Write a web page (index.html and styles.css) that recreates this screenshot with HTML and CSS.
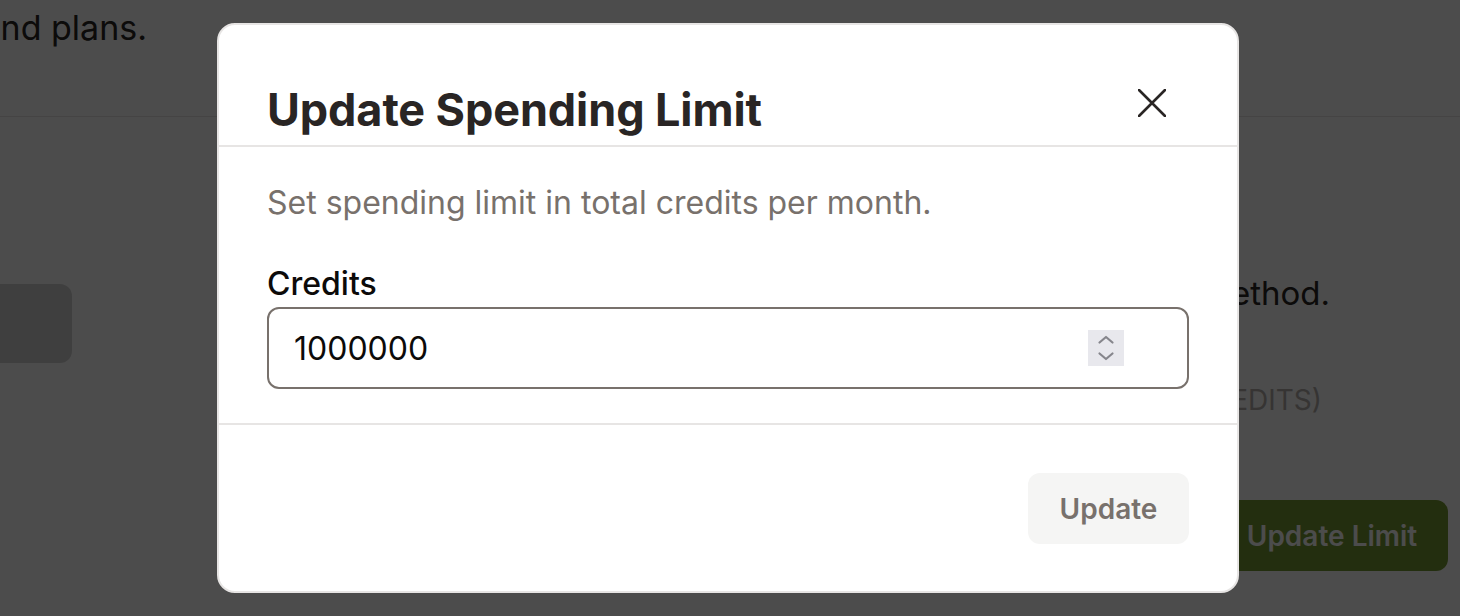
FILE: index.html
```html
<!DOCTYPE html>
<html lang="en">
<head>
    <meta charset="UTF-8">
    <meta name="viewport" content="width=device-width, initial-scale=1.0">
    <title>Billing</title>
    <link rel="stylesheet" href="styles.css">
</head>
<body>
  <div class="page">
    <header class="page-head">
      <div class="desc-wrap">
        <p class="page-desc">Manage your usage, billing and plans.</p>
      </div>
    </header>
    <main class="page-body">
      <div class="plan-card"></div>
      <section class="billing">
        <p class="billing-note">Add or update your payment method.</p>
        <span class="billing-label">SPENDING LIMIT (CREDITS)</span>
        <button class="btn-limit" type="button">Update Limit</button>
      </section>
    </main>
  </div>

  <div class="overlay">
    <div class="modal">
      <div class="modal-head">
        <h2 class="modal-title">Update Spending Limit</h2>
        <button class="close" type="button" aria-label="Close">
          <svg width="28" height="28" viewBox="0 0 28 28">
            <path d="M1 1 L27 27 M27 1 L1 27" stroke="#292524" stroke-width="2.6" stroke-linecap="round" fill="none"/>
          </svg>
        </button>
      </div>
      <form class="modal-body" id="limit-form">
        <p class="modal-text">Set spending limit in total credits per month.</p>
        <label for="credits" class="field-label">Credits</label>
        <div class="field">
          <input id="credits" class="input" type="text" value="1000000" />
          <span class="spin">
            <svg width="36" height="36" viewBox="0 0 36 36">
              <path d="M11.5 12.5 L18 7 L24.5 12.5" stroke="#86868c" stroke-width="2.2" fill="none" stroke-linecap="round" stroke-linejoin="round"/>
              <path d="M11.5 23.5 L18 29 L24.5 23.5" stroke="#86868c" stroke-width="2.2" fill="none" stroke-linecap="round" stroke-linejoin="round"/>
            </svg>
          </span>
        </div>
      </form>
      <div class="modal-foot">
        <button type="submit" form="limit-form" class="btn-update">Update</button>
      </div>
    </div>
  </div>
</body>
</html>
```

FILE: styles.css
```css
body {
  margin: 0;
  background-color: #fff;
  font-family: Inter, "Noto Sans", sans-serif;
  height: 100vh;
  overflow: hidden;
}

p {
  margin: 0;
}

.page-head {
  height: 116px;
  border-bottom: 1px solid #e7e5e4;
  display: flex;
}

.desc-wrap {
  width: 147px;
  display: flex;
  justify-content: flex-end;
  padding-top: 8px;
}

.page-desc {
  white-space: nowrap;
  font-size: 34px;
  line-height: 40px;
  color: #292524;
}

.page-body {
  display: flex;
  justify-content: space-between;
}

.plan-card {
  width: 100px;
  height: 79px;
  margin-left: -28px;
  margin-top: 167px;
  background-color: #d4d4d4;
  border-radius: 12px;
}

.billing {
  width: 560px;
  margin-right: 12px;
  padding-top: 156px;
  display: flex;
  flex-direction: column;
  align-items: flex-end;
}

.billing-note {
  white-space: nowrap;
  font-size: 33px;
  line-height: 40px;
  color: #292524;
  margin-right: 118px;
}

.billing-label {
  white-space: nowrap;
  font-size: 28px;
  line-height: 40px;
  color: #b5b0ac;
  margin-top: 67px;
  margin-right: 126px;
}

.btn-limit {
  margin-top: 80px;
  width: 232px;
  height: 71px;
  border: 0;
  border-radius: 12px;
  background-color: #779933;
  color: #fff;
  font-family: Inter, sans-serif;
  font-size: 28px;
  font-weight: 600;
}

.overlay {
  position: fixed;
  inset: 0;
  background-color: rgba(0, 0, 0, 0.7);
  display: flex;
  align-items: center;
  justify-content: center;
  padding-right: 4px;
}

.modal {
  width: 1022px;
  box-sizing: border-box;
  background-color: #fff;
  border: 2px solid #e7e5e4;
  border-radius: 18px;
}

.modal-head {
  display: flex;
  justify-content: space-between;
  align-items: flex-start;
  padding: 61px 65px 11px 48px;
  border-bottom: 2px solid #e7e5e4;
}

.modal-title {
  margin: 0;
  font-size: 45px;
  line-height: 48px;
  font-weight: 700;
  color: #292524;
  letter-spacing: -0.1px;
}

.close {
  width: 40px;
  height: 40px;
  margin-top: -3px;
  padding: 0;
  border: 0;
  background: none;
  display: flex;
  align-items: center;
  justify-content: center;
}

.modal-body {
  display: flex;
  flex-direction: column;
  padding: 36px 48px 34px;
  border-bottom: 2px solid #e7e5e4;
}

.modal-text {
  font-size: 32px;
  line-height: 40px;
  color: #78716c;
}

.field-label {
  margin-top: 41px;
  font-size: 32px;
  line-height: 40px;
  font-weight: 500;
  color: #0c0a09;
}

.field {
  margin-top: 3px;
  height: 82px;
  box-sizing: border-box;
  border: 2px solid #78716c;
  border-radius: 12px;
  display: flex;
  align-items: center;
  padding: 0 63px 0 25px;
}

.input {
  flex: 1;
  border: 0;
  outline: 0;
  padding: 0;
  font-family: Inter, sans-serif;
  font-size: 32px;
  color: #0c0a09;
}

.spin {
  width: 36px;
  height: 36px;
  background-color: #e8e8ed;
  display: flex;
}

.modal-foot {
  display: flex;
  justify-content: flex-end;
  padding: 48px 48px 47px;
}

.btn-update {
  width: 161px;
  height: 71px;
  border: 0;
  border-radius: 12px;
  background-color: #f5f5f4;
  color: #78716c;
  font-family: Inter, sans-serif;
  font-size: 28px;
  font-weight: 600;
}
```
